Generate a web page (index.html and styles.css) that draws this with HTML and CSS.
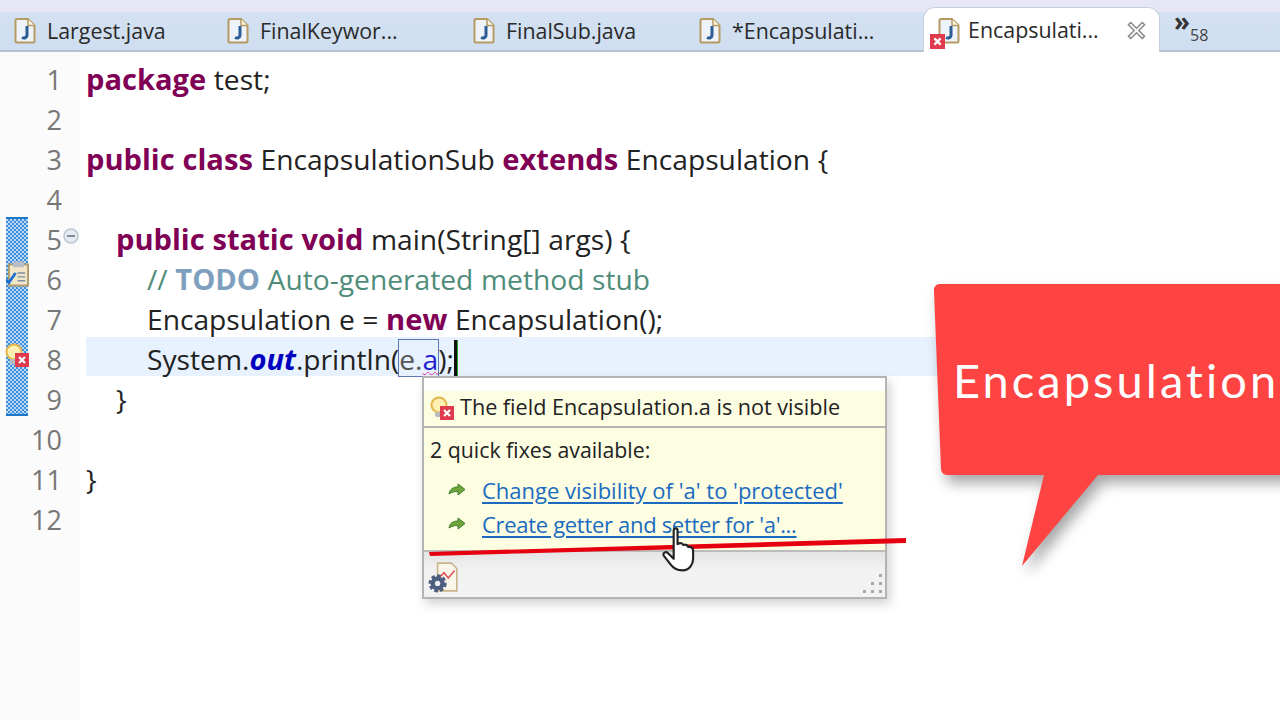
FILE: index.html
```html
<!DOCTYPE html>
<html lang="en">
<head>
<meta charset="utf-8">
<title>EncapsulationSub.java</title>
<link rel="stylesheet" href="styles.css">
</head>
<body>
<svg class="defs" width="0" height="0" aria-hidden="true">
  <defs>
    <symbol id="jfile" viewBox="0 0 24 26">
      <path d="M2.500 2.500a1.500 1.500 0 0 1 1.500-1.500h11l6.500 6.500v15.500a1.500 1.500 0 0 1-1.500 1.500h-16a1.500 1.500 0 0 1-1.500-1.500z" fill="#eef3fa" stroke="#b59a62" stroke-width="2"/>
      <path d="M15 1v6.500h6.500" fill="#fbf6e6" stroke="#b59a62" stroke-width="1.500"/>
      <path d="M14 8v9c0 3-3 3.500-5 2.500" fill="none" stroke="#2c5d94" stroke-width="3"/>
    </symbol>
    <symbol id="err" viewBox="0 0 12 12">
      <rect width="12" height="12" fill="#e03a4e"/>
      <path d="M3.500 3.500l5 5m0-5l-5 5" stroke="#fff" stroke-width="1.800"/>
    </symbol>
    <symbol id="bulb" viewBox="0 0 24 24">
      <circle cx="9" cy="9" r="7.500" fill="#fdf0b0" stroke="#e2b64c" stroke-width="2"/>
      <rect x="5" y="16" width="8" height="5" rx="2" fill="#b5b8bd"/>
      <rect x="10" y="10" width="14" height="14" fill="#e03a4e"/>
      <path d="M14 14l6 6m0-6l-6 6" stroke="#fff" stroke-width="2.200"/>
    </symbol>
    <symbol id="fix" viewBox="0 0 18 14">
      <path d="M1 11c1-5 4-7 9-7V1l7 5.500L10 12V8.500c-4 0-6 .5-9 2.500z" fill="#6fa53a" stroke="#3f7f2c" stroke-width="1"/>
    </symbol>
  </defs>
</svg>

<div class="page">
  <div class="top-strip"></div>
  <nav class="tabs">
    <div class="tab tab-a"><svg class="file"><use href="#jfile"/></svg><span>Largest.java</span></div>
    <div class="tab tab-b"><svg class="file"><use href="#jfile"/></svg><span>FinalKeywor...</span></div>
    <div class="tab tab-c"><svg class="file"><use href="#jfile"/></svg><span>FinalSub.java</span></div>
    <div class="tab tab-d"><svg class="file"><use href="#jfile"/></svg><span>*Encapsulati...</span></div>
    <div class="tab tab-active">
      <span class="file-wrap"><svg class="file"><use href="#jfile"/></svg><svg class="file-err"><use href="#err"/></svg></span>
      <span>Encapsulati...</span>
      <svg class="close" viewBox="0 0 20 20"><path d="M3 5l2-2 5 5 5-5 2 2-5 5 5 5-2 2-5-5-5 5-2-2 5-5z" fill="#fff" stroke="#8a8a8a" stroke-width="1.300"/></svg>
    </div>
    <div class="more"><span class="chev">»</span><span class="count">58</span></div>
  </nav>

  <main class="editor">
    <div class="ruler">
      <div class="marks"></div>
      <svg class="task" viewBox="0 0 24 28">
        <rect x="3" y="4" width="20" height="22" fill="#f1e6c8" stroke="#b09a6c" stroke-width="2"/>
        <rect x="7" y="1" width="12" height="6" rx="2" fill="#b8bcc4"/>
        <path d="M12 13h8M12 17h8M12 21h8" stroke="#7f8fa5" stroke-width="1.500"/>
        <path d="M0 20l3 3 7-10" fill="none" stroke="#1f6fd0" stroke-width="3"/>
      </svg>
      <svg class="quick"><use href="#bulb"/></svg>
    </div>
    <div class="lines">
      <div class="row"><span class="num">1</span><span class="fold"></span><code class="code"><b>package</b> test;</code></div>
      <div class="row"><span class="num">2</span><span class="fold"></span><code class="code"></code></div>
      <div class="row"><span class="num">3</span><span class="fold"></span><code class="code"><b>public class</b> EncapsulationSub <b>extends</b> Encapsulation {</code></div>
      <div class="row"><span class="num">4</span><span class="fold"></span><code class="code"></code></div>
      <div class="row"><span class="num">5</span><span class="fold"><svg class="fold-icon" viewBox="0 0 16 16"><circle cx="8" cy="8" r="7" fill="#e6ebf2" stroke="#bcc6d2" stroke-width="1.500"/><path d="M4 8h8" stroke="#7d8b9c" stroke-width="2"/></svg></span><code class="code in1"><b>public static void</b> main(String[] args) {</code></div>
      <div class="row"><span class="num">6</span><span class="fold"></span><code class="code in2 comment">// <b>TODO</b> Auto-generated method stub</code></div>
      <div class="row"><span class="num">7</span><span class="fold"></span><code class="code in2">Encapsulation e = <b>new</b> Encapsulation();</code></div>
      <div class="row"><span class="num">8</span><span class="fold"></span><code class="code in2 current">System.<b class="static">out</b>.println(<span class="sel">e.<span class="field">a</span></span>);<span class="caret"></span></code></div>
      <div class="row"><span class="num">9</span><span class="fold"></span><code class="code in1">}</code></div>
      <div class="row"><span class="num">10</span><span class="fold"></span><code class="code"></code></div>
      <div class="row"><span class="num">11</span><span class="fold"></span><code class="code">}</code></div>
      <div class="row"><span class="num">12</span><span class="fold"></span><code class="code"></code></div>
    </div>
  </main>

  <section class="hover">
    <header class="hover-head"><svg class="hover-bulb"><use href="#bulb"/></svg><span>The field Encapsulation.a is not visible</span></header>
    <div class="hover-body">
      <p class="fix-title">2 quick fixes available:</p>
      <ul class="fixes">
        <li><svg class="fix"><use href="#fix"/></svg><a>Change visibility of 'a' to 'protected'</a></li>
        <li><svg class="fix"><use href="#fix"/></svg><a class="tight">Create getter and setter for 'a'...</a></li>
      </ul>
    </div>
    <footer class="hover-foot">
      <svg class="tool" viewBox="0 0 30 30">
        <path d="M9 2h13l5 5v21H9z" fill="#fbf6ea" stroke="#c9b48c" stroke-width="1.500"/>
        <path d="M10 16l5-5 4 5 6-7" fill="none" stroke="#e0505a" stroke-width="1.500"/>
        <circle cx="9" cy="21" r="6.500" fill="#4c5f80" stroke="#4c5f80" stroke-width="4" stroke-dasharray="3 2"/>
        <circle cx="9" cy="21" r="6.500" fill="#4c5f80"/>
        <circle cx="9" cy="21" r="2.500" fill="#eef0f4"/>
      </svg>
      <svg class="grip" viewBox="0 0 22 22" fill="#a9a9a9"><rect x="18" y="1" width="3" height="3"/><rect x="18" y="9" width="3" height="3"/><rect x="18" y="17" width="3" height="3"/><rect x="10" y="9" width="3" height="3"/><rect x="10" y="17" width="3" height="3"/><rect x="2" y="17" width="3" height="3"/></svg>
    </footer>
  </section>

  <aside class="callout">
    <svg class="bubble" viewBox="0 0 360 300"><path d="M8 1H360V192H165L89 283 111 192H14a6 6 0 0 1-6-6L1 8a6 6 0 0 1 7-7z" fill="#fe4343"/></svg>
    <span class="callout-text">Encapsulation</span>
  </aside>

  <svg class="strike" viewBox="0 0 480 18"><path d="M1 14L478 0v5L2 18z" fill="#e6000f"/></svg>

  <svg class="hand" viewBox="0 0 36 46"><path d="M12 3c0-3 4-3 4 0v14c3-2 5-1 6 1 2-1 4 0 5 2 3-1 5 1 5 4v8c0 6-4 12-11 12-6 0-9-2-12-6L2 29c-2-3 2-5 4-3l6 6z" fill="#fff" stroke="#222" stroke-width="2.200" stroke-linejoin="round"/></svg>
</div>
</body>
</html>
```

FILE: styles.css
```css
* { box-sizing: border-box; }
html, body { margin: 0; height: 100%; }
body { background: #fff; overflow: hidden; font-family: "Open Sans", "Noto Sans", sans-serif; color: #1c1c1c; }
.defs { position: absolute; }
.page { position: relative; width: 1280px; height: 720px; overflow: hidden; display: flex; flex-direction: column; }

.top-strip { height: 12px; background: #e6e6f5; flex: none; }
.tabs { flex: none; height: 40px; display: flex; background: linear-gradient(#d3e1f2, #cfdef0); border-bottom: 2px solid #b5c1d2; font-size: 21.400px; }
.tab { display: flex; align-items: center; gap: 10px; padding-left: 13px; color: #2a2a2a; }
.tab span:not(.file-wrap) { margin-top: -2px; }
.tab-a { width: 213px; }
.tab-b { width: 246px; }
.tab-c { width: 226px; }
.tab-d { width: 238px; }
.tab-active { width: 237px; height: 46px; margin-top: -5px; padding-left: 13px; gap: 7px; background: #fff; border-radius: 12px 12px 0 0; border: 1px solid #c3cfdd; border-bottom: none; flex: none; position: relative; }
.file { width: 24px; height: 26px; flex: none; display: block; }
.file-wrap { position: relative; width: 24px; height: 26px; flex: none; }
.file-err { position: absolute; left: -7px; bottom: -5px; width: 15px; height: 15px; }
.close { width: 23px; height: 23px; margin-left: 19px; flex: none; }
.more { margin-left: 14px; display: flex; color: #333; }
.chev { font-size: 26px; line-height: 19px; font-weight: 700; }
.count { font-size: 16px; margin-top: 12px; line-height: 22px; color: #444; }

.editor { flex: 1; display: flex; position: relative; background: #fff; }
.ruler { width: 28px; flex: none; padding: 165px 0 0 6px; background: #fbfbfb; position: relative; }
.marks { height: 199px; background-color: #fff; background-image: repeating-conic-gradient(#3d8edc 0 25%, #bcd9f4 0 50%); background-size: 4px 4px; border-top: 2px solid #1f77c8; border-bottom: 2px solid #1f77c8; }
.task { position: absolute; left: 6px; top: 207px; width: 23px; height: 30px; }
.quick { position: absolute; left: 5px; top: 291px; width: 24px; height: 24px; }
.lines { flex: 1; display: flex; flex-direction: column; padding-top: 8px; background: linear-gradient(90deg, #fbfbfb 52px, #fff 52px); }
.row { display: flex; height: 40px; flex: none; }
.num { width: 34px; text-align: right; color: #777; line-height: 40px; font-size: 27px; flex: none; }
.fold { width: 24px; flex: none; position: relative; }
.fold-icon { position: absolute; left: 1px; top: 8px; width: 16px; height: 16px; }
.code { flex: 1; font-family: "Open Sans", "Noto Sans", sans-serif; line-height: 38px; color: #222; white-space: pre; font-size: 28.200px; word-spacing: .3px; }
.code b { color: #7f0055; font-weight: 700; font-size: 29.100px; }
.in1 { padding-left: 30px; }
.in2 { padding-left: 61px; }
.comment { color: #4f8d7a; }
.code.comment b { color: #7f9fbf; }
.code .static { color: #0000c0; font-style: italic; }
.current { background: linear-gradient(#e8f2fe 0 36px, transparent 36px); box-shadow: 0 -3px 0 #e8f2fe; }
.sel { outline: 1.500px solid #5a78b8; color: #555; display: inline-block; line-height: 38px; height: 36px; vertical-align: top; }
.field { color: #1f1fd0; text-decoration: underline wavy #e0379a 1px; }
.caret { display: inline-block; width: 4px; height: 36px; background: #111; border-right: 1px solid #2da02d; vertical-align: top; }

.hover { position: absolute; left: 422px; top: 376px; width: 465px; height: 223px; background: #fdfde2; border: 2px solid #b4b4b4; box-shadow: 3px 5px 10px rgba(0,0,0,.18); display: flex; flex-direction: column; font-size: 21.600px; color: #222; }
.hover-head { flex: none; margin-top: 13px; height: 37px; display: flex; align-items: center; gap: 6px; padding: 0 0 2px 6px; border-bottom: 2px solid #b4b4b4; box-shadow: 0 -13px 0 #fff; }
.hover-head span { margin-top: -2px; }
.hover-bulb { width: 24px; height: 24px; }
.hover-body { flex: 1; display: flex; flex-direction: column; padding-left: 6px; }
.fix-title { margin: 8px 0 0; line-height: 28px; font-size: 21.300px; }
.fixes { list-style: none; margin: 12px 0 0; padding: 0 0 0 18px; display: flex; flex-direction: column; gap: 6px; font-size: 22px; }
.fixes li { height: 28px; display: flex; align-items: center; gap: 16px; }
.fixes a { color: #1a6bc0; text-decoration: underline; text-decoration-thickness: 2px; text-underline-offset: 3px; }
.fixes .tight { letter-spacing: -.31px; }
.fix { width: 18px; height: 14px; flex: none; }
.hover-foot { flex: none; height: 47px; background: linear-gradient(#e4e4e4, #f2f2f2 40%); border-top: 2px solid #bcbcbc; display: flex; justify-content: space-between; align-items: flex-end; padding: 0 2px 2px 4px; }
.tool { width: 32px; height: 32px; margin-bottom: 2px; }
.grip { width: 22px; height: 22px; }

.callout { position: absolute; left: 933px; top: 283px; width: 347px; height: 290px; }
.bubble { position: absolute; left: 0; top: 0; width: 360px; height: 300px; filter: drop-shadow(5px 8px 7px rgba(0,0,0,.35)); }
.callout-text { position: absolute; left: 20px; top: 67px; font-family: Lato, "Open Sans", sans-serif; font-size: 47px; line-height: 60px; color: #fff; letter-spacing: 3.050px; white-space: nowrap; }

.strike { position: absolute; left: 428px; top: 538px; width: 480px; height: 18px; }
.hand { position: absolute; left: 662px; top: 527px; width: 35px; height: 46px; }
```
